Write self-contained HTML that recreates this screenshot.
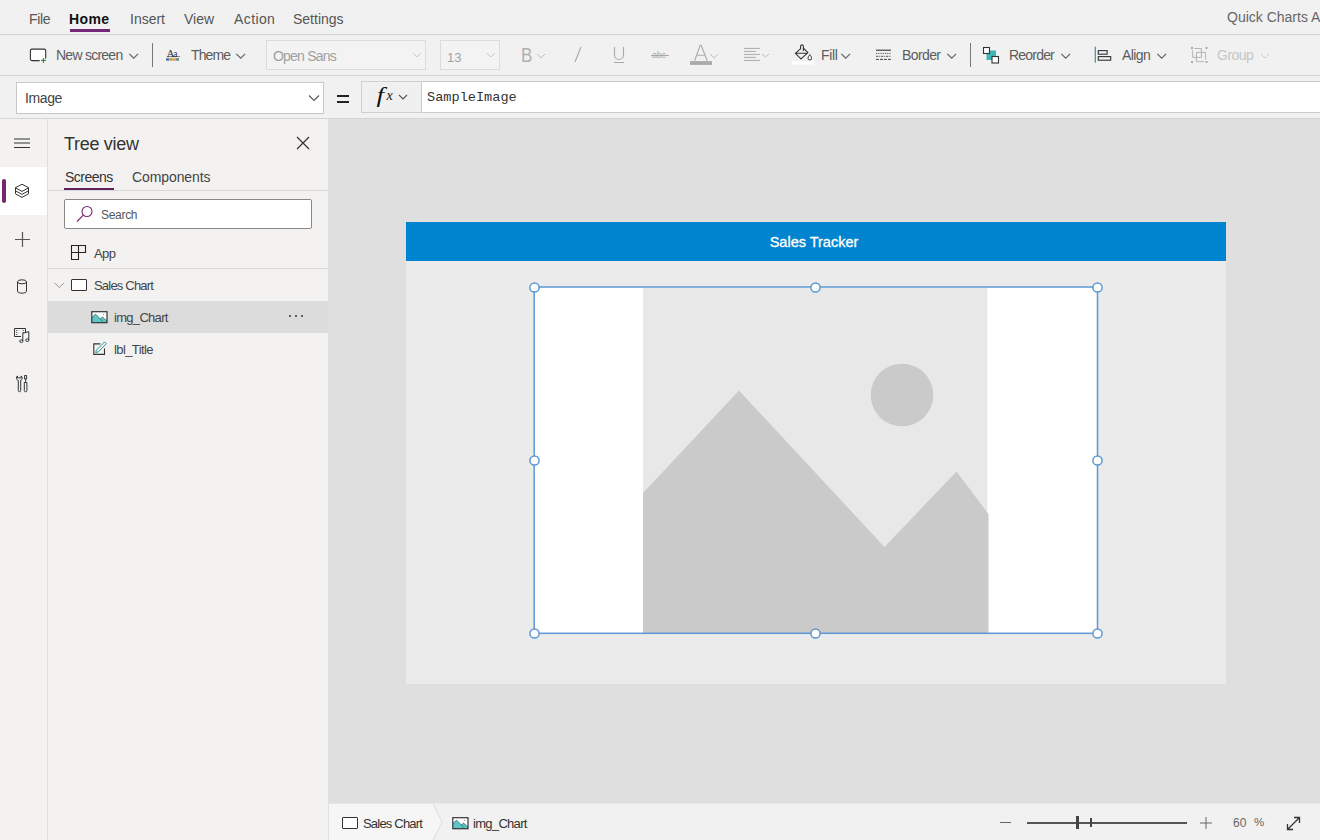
<!DOCTYPE html>
<html><head><meta charset="utf-8">
<style>
*{box-sizing:border-box;margin:0;padding:0}
html,body{width:1320px;height:840px;overflow:hidden;background:#f0f0f0;font-family:"Liberation Sans",sans-serif;color:#333}
.abs{position:absolute}
#menubar{left:0;top:0;width:1320px;height:35px;background:#f1f1f1;border-bottom:1px solid #d2d2d2}
#toolbar{left:0;top:35px;width:1320px;height:41px;background:#f1f1f1;border-bottom:1px solid #d2d2d2}
#formulabar{left:0;top:76px;width:1320px;height:43px;background:#f1f1f1;border-bottom:1px solid #d4d4d4}
#rail{left:0;top:119px;width:48px;height:721px;background:#f3f2f1;border-right:1px solid #e1dfdd}
#tree{left:48px;top:119px;width:281px;height:721px;background:#f3f2f1;border-right:1px solid #e1dfdd}
#canvas{left:329px;top:119px;width:991px;height:684px;background:#dfdfdf}
#status{left:329px;top:803px;width:991px;height:37px;background:#f1f1f1}
.txt{position:absolute;white-space:nowrap;line-height:1}
</style></head><body>
<div id="menubar" class="abs">
  <div class="txt" style="left:29px;top:12px;font-size:14px;color:#555;letter-spacing:-0.3px">File</div>
  <div class="txt" style="left:69px;top:12px;font-size:14px;color:#111;font-weight:bold;letter-spacing:0.4px">Home</div>
  <div class="abs" style="left:70px;top:29px;width:40px;height:3px;background:#742774"></div>
  <div class="txt" style="left:130px;top:12px;font-size:14px;color:#555">Insert</div>
  <div class="txt" style="left:184px;top:12px;font-size:14px;color:#555">View</div>
  <div class="txt" style="left:234px;top:12px;font-size:14px;color:#555;letter-spacing:0.4px">Action</div>
  <div class="txt" style="left:293px;top:12px;font-size:14px;color:#555">Settings</div>
  <div class="txt" style="left:1227px;top:10px;font-size:14px;color:#666">Quick Charts App</div>
</div>
<div id="toolbar" class="abs">
  <svg class="abs" style="left:24px;top:5px" width="28" height="28" viewBox="0 0 28 28"><path d="M15.7 20.6H7.9a1.5 1.5 0 0 1-1.5-1.5V10.6a1.5 1.5 0 0 1 1.5-1.5h12.3a1.5 1.5 0 0 1 1.5 1.5v7.9" fill="#fff" stroke="#333" stroke-width="1.1"/><path d="M19.5 18v4.9M17 20.4h5" stroke="#3a8a4a" stroke-width="1.1"/></svg>
  <div class="txt" style="left:56px;top:13px;font-size:14px;color:#5c5c5c;letter-spacing:-0.75px">New screen</div>
  <svg class="abs" style="left:128px;top:18px" width="12" height="7" viewBox="0 0 12 7"><path d="M1.3 0.9l4.4 4.3 4.4-4.3" fill="none" stroke="#666" stroke-width="1.25"/></svg>
  <div class="abs" style="left:152px;top:8px;width:1px;height:24px;background:#777"></div>
  <svg class="abs" style="left:160px;top:5px" width="30" height="30" viewBox="0 0 30 30"><text x="6.8" y="16.8" font-family="Liberation Serif" font-size="10.5" fill="#333" letter-spacing="-0.5">A</text><text x="13.2" y="16.8" font-family="Liberation Serif" font-size="9.5" fill="#333">a</text><path d="M7 16.6h13" stroke="#333" stroke-width="0.6"/><rect x="6" y="18.2" width="3.2" height="2.5" fill="#4f73a8"/><rect x="9.5" y="18.2" width="3.2" height="2.5" fill="#d38f3c"/><rect x="12.8" y="18.2" width="3.2" height="2.5" fill="#c9a66b"/><rect x="16" y="18.2" width="3" height="2.5" fill="#6c8b7c"/></svg>
  <div class="txt" style="left:191px;top:13px;font-size:14px;color:#5c5c5c;letter-spacing:-0.9px">Theme</div>
  <svg class="abs" style="left:235px;top:18px" width="12" height="7" viewBox="0 0 12 7"><path d="M1.3 0.9l4.4 4.3 4.4-4.3" fill="none" stroke="#666" stroke-width="1.25"/></svg>
  <div class="abs" style="left:266px;top:5px;width:160px;height:30px;border:1px solid #dcdcdc;background:#f3f3f3"></div>
  <div class="txt" style="left:273px;top:14px;font-size:14px;color:#a0a0a0;letter-spacing:-0.8px">Open Sans</div>
  <svg class="abs" style="left:412px;top:17px" width="10" height="6" viewBox="0 0 10 6"><path d="M1 1l4 4 4-4" fill="none" stroke="#c8c8c8" stroke-width="1"/></svg>
  <div class="abs" style="left:440px;top:5px;width:60px;height:30px;border:1px solid #dcdcdc;background:#f3f3f3"></div>
  <div class="txt" style="left:447px;top:16px;font-size:13px;color:#a0a0a0">13</div>
  <svg class="abs" style="left:486px;top:17px" width="10" height="6" viewBox="0 0 10 6"><path d="M1 1l4 4 4-4" fill="none" stroke="#c8c8c8" stroke-width="1"/></svg>
  <div class="txt" style="left:521px;top:10px;font-size:20px;color:#b0b0b0;transform:scaleX(0.85);transform-origin:left">B</div>
  <svg class="abs" style="left:536px;top:18px" width="10" height="6" viewBox="0 0 10 6"><path d="M1 1l4 4 4-4" fill="none" stroke="#bbb" stroke-width="1"/></svg>
  <svg class="abs" style="left:574px;top:11px" width="8" height="17" viewBox="0 0 8 17"><path d="M7 1L1 16" stroke="#aaa" stroke-width="1.1"/></svg>
  <svg class="abs" style="left:613px;top:11px" width="12" height="18" viewBox="0 0 12 18"><path d="M1.5 1v8a4.5 4.5 0 0 0 9 0V1M1 16.5h10" fill="none" stroke="#aaa" stroke-width="1.1"/></svg>
  <div class="txt" style="left:652px;top:16px;font-size:9px;color:#aaa;letter-spacing:-0.3px">abc</div>
  <div class="abs" style="left:651px;top:20px;width:18px;height:1px;background:#aaa"></div>
  <svg class="abs" style="left:689px;top:9px" width="24" height="22" viewBox="0 0 24 22"><path d="M5.6 16.8L11.2 1.3h1L18.2 16.8M8.3 11.3h7.1" fill="none" stroke="#aaa" stroke-width="1.1"/><rect x="1" y="17.1" width="22" height="3.8" fill="#aaa"/></svg>
  <svg class="abs" style="left:709px;top:18px" width="11" height="6" viewBox="0 0 11 6"><path d="M1 1l4.2 4 4.2-4" fill="none" stroke="#bbb" stroke-width="1"/></svg>
  <svg class="abs" style="left:744px;top:12px" width="18" height="14" viewBox="0 0 18 14"><path d="M0 1.4h16M0 4.4h12M0 7.4h16M0 10.4h12M0 13.4h16" stroke="#aaa" stroke-width="1"/></svg>
  <svg class="abs" style="left:761px;top:18px" width="9" height="5" viewBox="0 0 9 5"><path d="M1 1l3.5 3 3.5-3" fill="none" stroke="#bbb" stroke-width="1"/></svg>
  <svg class="abs" style="left:788px;top:5px" width="30" height="30" viewBox="0 0 30 30"><path d="M12.6 8.6L7.4 13.3 13 18.8 19.9 12.6 15.4 8.1M7.4 13.3H19.9M12.6 9.5V6.3a1.4 1.4 0 0 1 2.8 0V11" fill="none" stroke="#333" stroke-width="1.1" stroke-linejoin="round"/><path d="M21.8 14.6c-1 1.4-1.8 2.4-1.8 3.6a1.8 1.8 0 0 0 3.6 0c0-1.2-.8-2.2-1.8-3.6z" fill="none" stroke="#333" stroke-width="1"/><rect x="4" y="21" width="22" height="3.5" fill="#fff"/></svg>
  <div class="txt" style="left:821px;top:13px;font-size:14px;color:#5c5c5c;letter-spacing:-0.3px">Fill</div>
  <svg class="abs" style="left:840px;top:18px" width="12" height="7" viewBox="0 0 12 7"><path d="M1.3 0.9l4.4 4.3 4.4-4.3" fill="none" stroke="#666" stroke-width="1.25"/></svg>
  <svg class="abs" style="left:875px;top:14px" width="17" height="12" viewBox="0 0 17 12"><path d="M1 1.2h15" stroke="#333" stroke-width="1.1"/><path d="M1 4.4h15" stroke="#444" stroke-width="0.9" stroke-dasharray="1 0.8"/><path d="M1 7.3h15" stroke="#444" stroke-width="0.9" stroke-dasharray="2.5 0.8 0.8 0.8"/><path d="M1 10.4h15" stroke="#444" stroke-width="1" stroke-dasharray="3 1"/></svg>
  <div class="txt" style="left:902px;top:13px;font-size:14px;color:#5c5c5c;letter-spacing:-0.6px">Border</div>
  <svg class="abs" style="left:946px;top:18px" width="12" height="7" viewBox="0 0 12 7"><path d="M1.3 0.9l4.4 4.3 4.4-4.3" fill="none" stroke="#666" stroke-width="1.25"/></svg>
  <div class="abs" style="left:970px;top:8px;width:1px;height:24px;background:#777"></div>
  <svg class="abs" style="left:982px;top:11px" width="18" height="18" viewBox="0 0 18 18"><rect x="4.5" y="4.5" width="9.5" height="9.5" fill="#3fb5b5"/><rect x="1.5" y="1.5" width="6" height="6" fill="#fff" stroke="#333" stroke-width="1.1"/><rect x="10" y="10.5" width="6.5" height="6.5" fill="#fff" stroke="#333" stroke-width="1.1"/></svg>
  <div class="txt" style="left:1009px;top:13px;font-size:14px;color:#5c5c5c;letter-spacing:-0.8px">Reorder</div>
  <svg class="abs" style="left:1060px;top:18px" width="12" height="7" viewBox="0 0 12 7"><path d="M1.3 0.9l4.4 4.3 4.4-4.3" fill="none" stroke="#666" stroke-width="1.25"/></svg>
  <svg class="abs" style="left:1094px;top:11px" width="18" height="18" viewBox="0 0 18 18"><path d="M1.3 0.8v16" stroke="#2a9a9a" stroke-width="1.2"/><rect x="4.3" y="4.6" width="8.8" height="3.6" fill="none" stroke="#333" stroke-width="1.1"/><rect x="4.3" y="10.6" width="12.4" height="3.6" fill="none" stroke="#333" stroke-width="1.1"/></svg>
  <div class="txt" style="left:1122px;top:13px;font-size:14px;color:#5c5c5c;letter-spacing:-0.6px">Align</div>
  <svg class="abs" style="left:1156px;top:18px" width="12" height="7" viewBox="0 0 12 7"><path d="M1.3 0.9l4.4 4.3 4.4-4.3" fill="none" stroke="#666" stroke-width="1.25"/></svg>
  <svg class="abs" style="left:1186px;top:7px" width="26" height="24" viewBox="0 0 26 24"><g fill="#aaa"><rect x="5" y="5" width="2" height="2"/><rect x="19.5" y="5" width="2" height="2"/><rect x="5" y="19" width="2" height="2"/><rect x="19.5" y="19" width="2" height="2"/></g><path d="M8.3 6.5H15.4V15.4H6.6V8.3M10.4 17.6V10.4H19.6V17.6M18 19.6H10.4V17" fill="none" stroke="#b5b5b5" stroke-width="1"/></svg>
  <div class="txt" style="left:1217px;top:13px;font-size:14px;color:#c6c6c6;letter-spacing:-0.5px">Group</div>
  <svg class="abs" style="left:1260px;top:18px" width="10" height="6" viewBox="0 0 10 6"><path d="M1 1l4 4 4-4" fill="none" stroke="#ccc" stroke-width="1"/></svg>
</div>
<div id="formulabar" class="abs">
  <div class="abs" style="left:16px;top:6px;width:308px;height:32px;border:1px solid #c8c8c8;background:#fff"></div>
  <div class="txt" style="left:25px;top:15px;font-size:14px;color:#444;letter-spacing:-0.4px">Image</div>
  <svg class="abs" style="left:308px;top:18px" width="12" height="8" viewBox="0 0 12 8"><path d="M1 1.5l5 5 5-5" fill="none" stroke="#555" stroke-width="1.1"/></svg>
  <div class="abs" style="left:337px;top:19px;width:12px;height:2px;background:#222"></div>
  <div class="abs" style="left:337px;top:25px;width:12px;height:2px;background:#222"></div>
  <div class="abs" style="left:361px;top:5px;width:61px;height:32px;border:1px solid #d0d0d0;border-right:none;background:#f0f0f0"></div>
  <svg class="abs" style="left:370px;top:6px" width="30" height="30" viewBox="0 0 30 30"><text x="0" y="0" transform="translate(6.5 20) scale(1.3 1)" font-family="Liberation Serif" font-style="italic" font-size="21" fill="#111">f</text><text x="16.5" y="17.5" font-family="Liberation Serif" font-style="italic" font-size="14" fill="#111">x</text></svg>
  <svg class="abs" style="left:398px;top:18px" width="10" height="6" viewBox="0 0 10 6"><path d="M1 1l4 4 4-4" fill="none" stroke="#555" stroke-width="1.1"/></svg>
  <div class="abs" style="left:421px;top:5px;width:899px;height:32px;border:1px solid #cccccc;border-right:none;background:#fff"></div>
  <div class="txt" style="left:427px;top:15px;font-size:13.6px;color:#333;font-family:'Liberation Mono',monospace">SampleImage</div>
</div>
<div id="rail" class="abs">
  <svg class="abs" style="left:14px;top:19px" width="17" height="11" viewBox="0 0 17 11"><path d="M0 1h16M0 5h16M0 9.5h16" stroke="#333" stroke-width="1.1"/></svg>
  <div class="abs" style="left:0;top:48px;width:47px;height:48px;background:#fff"></div>
  <div class="abs" style="left:2px;top:60px;width:4px;height:24px;background:#742774;border-radius:2px"></div>
  <svg class="abs" style="left:14px;top:64px" width="16" height="16" viewBox="0 0 16 16"><path d="M1.3 4.8L8 1.2l6.7 3.6L8 8.4z" fill="none" stroke="#333" stroke-width="1"/><path d="M1.5 4.8v6M14.5 4.8v6M1.5 7.8L8 11.4l6.5-3.6M1.5 10.8L8 14.4l6.5-3.6" fill="none" stroke="#333" stroke-width="1"/></svg>
  <svg class="abs" style="left:14px;top:112px" width="17" height="17" viewBox="0 0 17 17"><path d="M8.5 1v15M1 8.5h15" stroke="#555" stroke-width="1.2"/></svg>
  <svg class="abs" style="left:16px;top:160px" width="12" height="15" viewBox="0 0 12 15"><ellipse cx="6" cy="2.8" rx="4.5" ry="2" fill="none" stroke="#333" stroke-width="1"/><path d="M1.5 2.8v9.4c0 1.1 2 2 4.5 2s4.5-.9 4.5-2V2.8" fill="none" stroke="#333" stroke-width="1"/></svg>
  
  
</div>
<div id="tree" class="abs">
  <div class="txt" style="left:16px;top:16px;font-size:18px;color:#333;letter-spacing:-0.3px">Tree view</div>
  <svg class="abs" style="left:248px;top:17px" width="14" height="14" viewBox="0 0 14 14"><path d="M1 1l12 12M13 1L1 13" stroke="#333" stroke-width="1.2"/></svg>
  <div class="txt" style="left:17px;top:51px;font-size:14px;color:#333;letter-spacing:-0.5px">Screens</div>
  <div class="txt" style="left:84px;top:51px;font-size:14px;color:#444;letter-spacing:-0.1px">Components</div>
  <div class="abs" style="left:0;top:71px;width:280px;height:1px;background:#d8d8d8"></div>
  <div class="abs" style="left:16px;top:69px;width:50px;height:2.2px;background:#62205f"></div>
  <div class="abs" style="left:16px;top:80px;width:248px;height:30px;border:1px solid #8a8886;border-radius:2px;background:#fff"></div>
  <svg class="abs" style="left:28px;top:86px" width="18" height="18" viewBox="0 0 18 18"><circle cx="11" cy="6.5" r="5" fill="none" stroke="#742774" stroke-width="1.1"/><path d="M7.3 10.2L1 16.5" stroke="#742774" stroke-width="1.1"/></svg>
  <div class="txt" style="left:53px;top:90px;font-size:12px;color:#555;letter-spacing:-0.3px">Search</div>
  <svg class="abs" style="left:22px;top:125px" width="17" height="17" viewBox="0 0 17 17"><path d="M1.5 1.5h14v7h-14zM1.5 8.5v7h7V1.5" fill="none" stroke="#222" stroke-width="1.1"/></svg>
  <div class="txt" style="left:46px;top:128px;font-size:13px;color:#444;letter-spacing:-0.6px">App</div>
  <div class="abs" style="left:0;top:149px;width:280px;height:1px;background:#d8d8d8"></div>
  <svg class="abs" style="left:6px;top:163px" width="12" height="8" viewBox="0 0 12 8"><path d="M0.5 0.8l4.8 4.8 4.8-4.8" fill="none" stroke="#999" stroke-width="1"/></svg>
  <div class="abs" style="left:23px;top:160px;width:16px;height:12px;border:1.2px solid #333;border-radius:1px;background:#fff"></div>
  <div class="txt" style="left:46px;top:160px;font-size:13px;color:#444;letter-spacing:-0.8px">Sales Chart</div>
  <div class="abs" style="left:0;top:182px;width:280px;height:32px;background:#dcdcdc"></div>
  <svg class="abs" style="left:43px;top:192px" width="18" height="14" viewBox="0 0 18 14"><rect x="0.8" y="0.7" width="15.2" height="11" fill="#fff"/><path d="M1 11.8V6.5L4.6 3.2 9.3 8 11.5 6.1 16 10.2V11.8z" fill="#5ec6c6"/><path d="M1 6.5L4.6 3.2 11.8 10.6M9.3 8L11.5 6.1 16 10.2" fill="none" stroke="#2f7373" stroke-width="0.9"/><circle cx="12.6" cy="3.4" r="0.55" fill="#888"/><rect x="0.8" y="0.7" width="15.2" height="11" fill="none" stroke="#333" stroke-width="1.2"/></svg>
  <div class="txt" style="left:66px;top:192px;font-size:13px;color:#444;letter-spacing:-0.7px">img_Chart</div>
  <div class="abs" style="left:241px;top:196px;width:2.4px;height:2.4px;background:#333;border-radius:50%"></div>
  <div class="abs" style="left:247px;top:196px;width:2.4px;height:2.4px;background:#333;border-radius:50%"></div>
  <div class="abs" style="left:253px;top:196px;width:2.4px;height:2.4px;background:#333;border-radius:50%"></div>
  <svg class="abs" style="left:44px;top:222px" width="16" height="16" viewBox="0 0 16 16"><path d="M8.3 2.9H1.8V13.4H12.5V7.6" fill="none" stroke="#333" stroke-width="1.1"/><path d="M3.7 11.6l0.7-2.5 8.2-8.2 1.8 1.8-8.2 8.2z" fill="#f3f2f1" stroke="#2a9a9a" stroke-width="1"/></svg>
  <div class="txt" style="left:66px;top:224px;font-size:13px;color:#444;letter-spacing:-0.6px">lbl_Title</div>
</div>
<svg class="abs" style="left:0;top:0" width="48" height="420" viewBox="0 0 48 420">
  <g fill="none" stroke="#333" stroke-width="1">
    <path d="M21 336.5H14.5V328.5H25.5V333"/>
    <path d="M16.8 330v5.5M23.2 330v3" stroke-dasharray="1 1"/>
    <path d="M22.8 341V333.3L28.8 331.6V340"/>
    <ellipse cx="21.3" cy="341.2" rx="1.6" ry="1.3"/>
    <ellipse cx="27.3" cy="340.2" rx="1.6" ry="1.3"/>
    <path d="M18.3 380.5v10a1.2 1.2 0 0 0 2.4 0v-10"/>
    <path d="M18.3 380.5a2.6 2.6 0 0 1-0.8-4.6v2h3.6v-2a2.6 2.6 0 0 1-0.8 4.6"/>
    <path d="M24.6 375.5h2v3.5h-2zM25.6 379v3.5"/>
    <path d="M24.3 382.5h2.6v8a1.3 1.3 0 0 1-2.6 0z"/>
  </g>
</svg>
<div id="canvas" class="abs">
  <div class="abs" style="left:77px;top:103px;width:820px;height:462px;background:#ebebeb">
    <div class="abs" style="left:0;top:0;width:820px;height:39px;background:#0084d0"></div>
    <div class="txt" style="left:-2px;top:13px;width:820px;text-align:center;font-size:14.5px;color:#fff;-webkit-text-stroke:0.3px #fff;letter-spacing:0px">Sales Tracker</div>
  </div>
</div>
<svg class="abs" style="left:0;top:0" width="1320" height="840" viewBox="0 0 1320 840">
  <rect x="534" y="287" width="563" height="346" fill="#fff"/>
  <rect x="643" y="288" width="344.3" height="345" fill="#e8e8e8"/>
  <path d="M643 493L739 390.5 884.5 547 956.5 471.5 988.5 514V633H643z" fill="#cacaca"/>
  <circle cx="902" cy="395" r="31.3" fill="#cacaca"/>
  <rect x="534.2" y="287" width="563.3" height="346.3" fill="none" stroke="#5e98d2" stroke-width="1.5"/>
  <g fill="#fff" stroke="#5e98d2" stroke-width="1.5">
    <circle cx="534.5" cy="287.5" r="4.6"/><circle cx="815.5" cy="287.5" r="4.6"/><circle cx="1097.5" cy="287.5" r="4.6"/>
    <circle cx="534.5" cy="460.5" r="4.6"/><circle cx="1097.5" cy="460.5" r="4.6"/>
    <circle cx="534.5" cy="633.5" r="4.6"/><circle cx="815.5" cy="633.5" r="4.6"/><circle cx="1097.5" cy="633.5" r="4.6"/>
  </g>
</svg>
<div id="status" class="abs">
  <div class="abs" style="left:0;top:0;width:991px;height:1px;background:#e6e6e6"></div>
  <svg class="abs" style="left:0;top:0" width="130" height="37" viewBox="0 0 130 37"><path d="M0 1H104L113 19 104 37H0z" fill="#f6f6f6"/><path d="M104 1L113 19 104 37" fill="none" stroke="#dcdcdc" stroke-width="1"/></svg>
  <div class="abs" style="left:13px;top:14px;width:16px;height:12px;border:1.2px solid #333;border-radius:1px;background:#fff"></div>
  <div class="txt" style="left:34px;top:14px;font-size:13px;color:#333;letter-spacing:-0.8px">Sales Chart</div>
  <svg class="abs" style="left:123px;top:14px" width="18" height="14" viewBox="0 0 18 14"><rect x="0.8" y="0.7" width="15.2" height="11" fill="#fff"/><path d="M1 11.8V6.5L4.6 3.2 9.3 8 11.5 6.1 16 10.2V11.8z" fill="#5ec6c6"/><path d="M1 6.5L4.6 3.2 11.8 10.6M9.3 8L11.5 6.1 16 10.2" fill="none" stroke="#2f7373" stroke-width="0.9"/><circle cx="12.6" cy="3.4" r="0.55" fill="#888"/><rect x="0.8" y="0.7" width="15.2" height="11" fill="none" stroke="#333" stroke-width="1.2"/></svg>
  <div class="txt" style="left:144px;top:14px;font-size:13px;color:#333;letter-spacing:-0.7px">img_Chart</div>
  <div class="abs" style="left:671px;top:19px;width:11px;height:1px;background:#666"></div>
  <div class="abs" style="left:698px;top:19px;width:160px;height:2px;background:#555"></div>
  <div class="abs" style="left:747px;top:13px;width:3px;height:13px;background:#444"></div>
  <div class="abs" style="left:761px;top:15px;width:2px;height:9px;background:#444"></div>
  <svg class="abs" style="left:871px;top:14px" width="12" height="12" viewBox="0 0 12 12"><path d="M6 0v12M0 6h12" stroke="#666" stroke-width="1"/></svg>
  <div class="txt" style="left:904px;top:14px;font-size:12px;color:#666">60</div>
  <div class="txt" style="left:925px;top:14px;font-size:11.5px;color:#666">%</div>
  <svg class="abs" style="left:957px;top:13px" width="15" height="15" viewBox="0 0 15 15"><path d="M1.5 13.5l12-12M8 1.5h5.5V7M1.5 8v5.5H7" fill="none" stroke="#333" stroke-width="1.3"/></svg>
</div>
</body></html>
